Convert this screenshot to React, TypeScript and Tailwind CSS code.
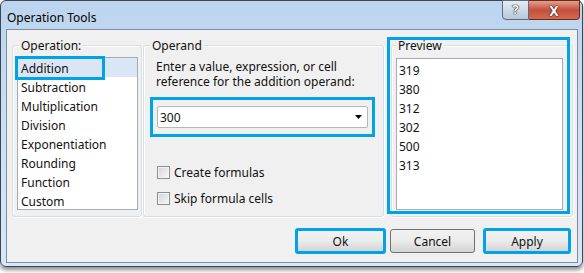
import React from 'react';

const operations = ['Addition', 'Subtraction', 'Multiplication', 'Division', 'Exponentiation', 'Rounding', 'Function', 'Custom'];
const preview = ['319', '380', '312', '302', '500', '313'];

const GroupBox: React.FC<{ label: string; labelLeft: string; className: string; children: React.ReactNode }> = ({ label, labelLeft, className, children }) => (
  <div className={`relative border border-[#d5dfe5] rounded-[3px] shadow-[inset_1px_1px_0_#fff,1px_1px_0_#fff] ${className}`}>
    <span className={`absolute -top-[8px] ${labelLeft} px-[2px] bg-[#f0f0f0] leading-[15px]`}>{label}</span>
    {children}
  </div>
);

const Checkbox: React.FC<{ label: string; className: string }> = ({ label, className }) => (
  <div className={`flex items-center gap-[4px] ${className}`}>
    <span className="w-[13px] h-[13px] border border-[#8e8f8f] bg-linear-to-br from-[#d2d4d8] to-[#f8f8f8] shadow-[inset_0_0_0_1px_#f4f4f4]" />
    <span className="leading-[15px]">{label}</span>
  </div>
);

const Button: React.FC<{ label: string; className: string }> = ({ label, className }) => (
  <button className={`flex items-center justify-center rounded-[3px] bg-linear-to-b from-[#f2f2f2] via-[#ebebeb] to-[#d4d4d4] leading-[15px] ${className}`}>
    {label}
  </button>
);

export default function App() {
  return (
    <div className="w-[584px] h-[273px] bg-white overflow-hidden text-[12px] text-[#111] font-['Segoe_UI','Noto_Sans',sans-serif]">
      <div className="w-[583px] h-[267px] flex flex-col rounded-[6px] border border-[#3a4656] bg-linear-to-b from-[#bcd4ee] via-[#cde0f4] to-[#d7e7f7] shadow-[0_3px_4px_rgba(0,0,0,0.45)]">
        <div className="h-[28px] flex items-start">
          <span className="ml-[6px] mt-[9px] leading-[15px] text-[12px] text-black">Operation Tools</span>
          <div className="ml-auto mr-[2px] flex h-[20px] -mt-[1px]">
            <div className="w-[27px] h-full flex items-center justify-center border border-[#5b6b80] rounded-bl-[4px] bg-linear-to-b from-[#e4ecf5] via-[#cfdae7] to-[#b8c7d8] text-white font-bold text-[13px] [text-shadow:0_0_1px_#222,0_0_1px_#222,0_0_1px_#222]">
              ?
            </div>
            <div className="w-[51px] h-full flex items-center justify-center border border-l-0 border-[#6b2a20] rounded-br-[4px] bg-linear-to-b from-[#e3a08f] via-[#c4503a] to-[#d26a50] text-white font-bold text-[14px] [text-shadow:0_0_1px_#300,0_0_1px_#300,0_0_1px_#300]">
              X
            </div>
          </div>
        </div>

        <div className="ml-[5px] w-[572px] h-[234px] border border-[#7d8ea3] bg-[#f0f0f0] flex flex-col">
          <div className="flex pt-[15px] pl-[5px]">
            <GroupBox label="Operation:" labelLeft="left-[6px]" className="w-[130px] h-[172px]">
              <div className="ml-[4px] mt-[11px] w-[121px] h-[153px] border border-[#a5acb5] bg-white">
                {operations.map((op, i) => (
                  <div key={op} className={`relative h-[19px] flex items-center pl-[3px] pt-[2px] ${i === 0 ? 'bg-[#dbe6f5]' : ''}`}>
                    {op}
                    {i === 0 && (
                      <span className="absolute -left-[3px] -top-[2px] w-[90px] h-[24px] border-[3px] border-[#00a2e8]" />
                    )}
                  </div>
                ))}
              </div>
            </GroupBox>

            <GroupBox label="Operand" labelLeft="left-[6px]" className="ml-[1px] w-[241px] h-[172px]">
              <div className="pl-[12px] mt-[13px]">
                <div className="h-[15px] leading-[15px]">Enter a value, expression, or cell</div>
                <div className="h-[15px] leading-[15px]">reference for the addition operand:</div>
              </div>
              <div className="ml-[6px] mt-[8px] w-[225px] h-[40px] border-[3px] border-[#00a2e8] pl-[4px] pt-[6px]">
                <div className="w-[211px] h-[22px] border border-[#b4b8be] rounded-[2px] bg-white flex items-center pl-[2px] pr-[5px]">
                  <span className="leading-[15px]">300</span>
                  <svg className="ml-auto" width="7" height="4" viewBox="0 0 7 4">
                    <polygon points="0,0 7,0 3.5,4" fill="#000" />
                  </svg>
                </div>
              </div>
              <Checkbox label="Create formulas" className="ml-[13px] mt-[28px]" />
              <Checkbox label="Skip formula cells" className="ml-[13px] mt-[11px]" />
            </GroupBox>

            <GroupBox label="Preview" labelLeft="left-[4px]" className="ml-[7px] w-[182px] h-[172px]">
              <div className="ml-[4px] mt-[12px] w-[167px] h-[152px] border border-[#a5acb5] bg-white pt-[2px]">
                {preview.map(v => (
                  <div key={v} className="h-[19px] flex items-center pl-[2px]">{v}</div>
                ))}
              </div>
              <span className="absolute -left-[5px] -top-[9px] w-[183px] h-[177px] border-[3px] border-[#00a2e8]" />
            </GroupBox>
          </div>

          <div className="flex items-center justify-end pr-[6px] mt-[11px]">
            <Button label="Ok" className="w-[91px] h-[26px] border-[3px] border-[#00a2e8]" />
            <Button label="Cancel" className="ml-[4px] w-[85px] h-[24px] border border-[#707070]" />
            <Button label="Apply" className="ml-[8px] w-[88px] h-[26px] border-[3px] border-[#00a2e8]" />
          </div>
        </div>
      </div>
    </div>
  );
}
